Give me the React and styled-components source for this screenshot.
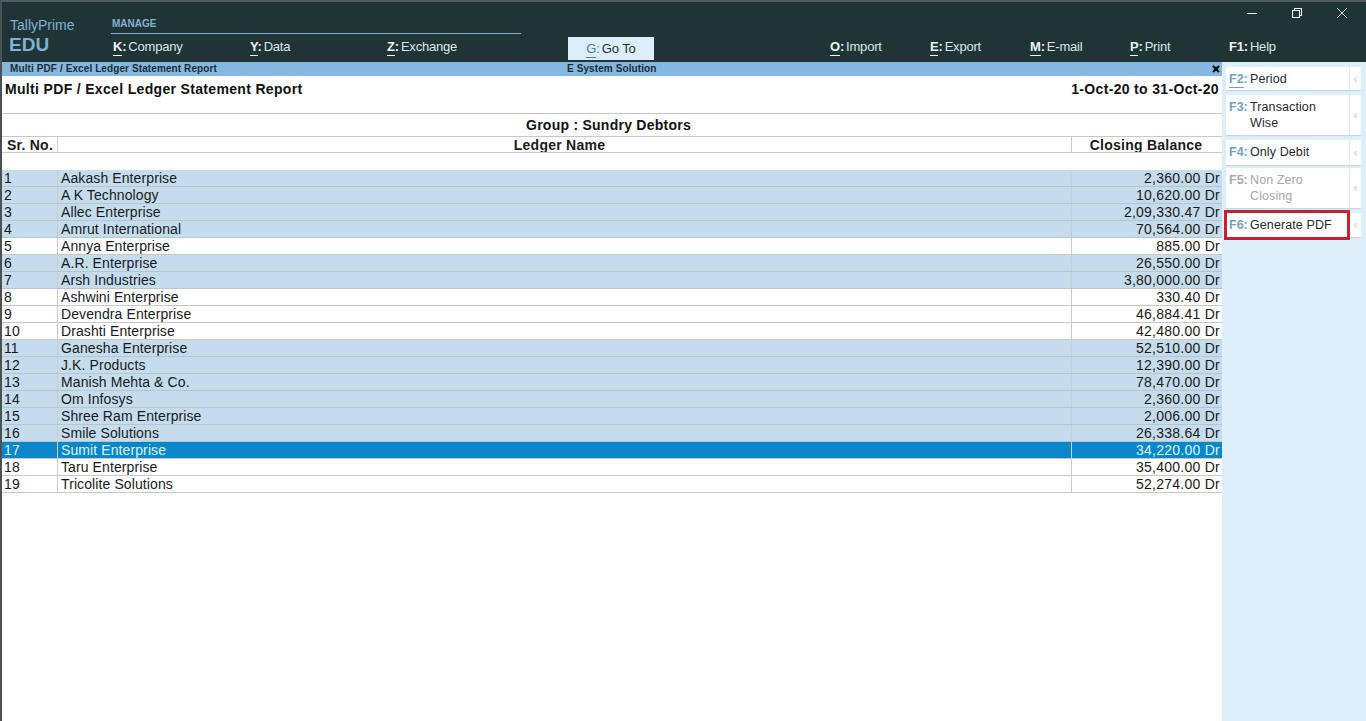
import React from "react";
import styled, { createGlobalStyle } from "styled-components";

const Global = createGlobalStyle`
  html, body { margin: 0; padding: 0; background: #fff; }
  body { font-family: "Liberation Sans", Arial, sans-serif; color: #111; overflow: hidden; }
`;

const Page = styled.div`
  width: 1366px; height: 721px; display: flex; flex-direction: column;
  border-top: 2px solid #555b5c; border-left: 2px solid #4a5253; box-sizing: border-box; overflow: hidden;
`;
const Header = styled.header`
  height: 60px; flex: none; background: #213435; display: flex; padding-left: 7px; position: relative;
`;
const Brand = styled.div`
  width: 102px; flex: none; display: flex; flex-direction: column; padding: 15px 0 0 1px; box-sizing: border-box;
`;
const BrandName = styled.div`
  font-size: 14px; line-height: 16px; color: #7fb2d4;
`;
const BrandEdu = styled.div`
  font-size: 19px; line-height: 22px; font-weight: 700; color: #7fb2d4; margin: 1px 0 0 -1px;
`;
const Manage = styled.div`
  width: 410px; flex: none; display: flex; flex-direction: column; padding-top: 16px; box-sizing: border-box;
`;
const ManageTitle = styled.div`
  font-size: 10px; line-height: 12px; font-weight: 700; color: #7fb2d4; border-bottom: 1px solid #7fb2d4;
  padding: 0 0 4px 1px; height: 11px;
`;
const ManageMenu = styled.div`
  display: flex; padding-left: 2px; margin-top: 5px;
`;
const MenuItem = styled.div`
  width: ${p => p.$w || 100}px; flex: none; font-size: 13px; line-height: 16px; color: #dbe6e9; white-space: nowrap;
  display: flex; letter-spacing: -0.2px;
`;
const Key = styled.span`
  font-weight: 700; margin-right: 2px; color: #eef3f5;
  & > u { text-decoration: none; border-bottom: 1px solid #eef3f5; padding-bottom: 1px; }
`;
const GoTo = styled.div`
  margin: 35px 0 0 47px; width: 86px; height: 23px; flex: none; background: #dceefb; color: #213435;
  font-size: 13px; display: flex; align-items: center; justify-content: center; letter-spacing: -0.1px;
`;
const GoKey = styled.span`
  color: #4e7f9e; margin-right: 2px;
  & > u { text-decoration: none; border-bottom: 1px solid #4e7f9e; padding-bottom: 1px; }
`;
const RightMenu = styled.div`
  display: flex; margin-left: 176px; padding-top: 37px;
`;
const WindowButtons = styled.div`
  position: absolute; top: 5px; right: 18px; display: flex; gap: 33px; align-items: center;
`;
const Body = styled.div`
  flex: 1; display: flex; min-height: 0;
`;
const Main = styled.main`
  width: 1220px; flex: none; box-sizing: border-box; display: flex; flex-direction: column; background: #fff;
`;
const TitleBar = styled.div`
  height: 14px; padding: 0 2px 0 8px; flex: none; background: #85b8e0; display: grid;
  grid-template-columns: 557px 1fr 10px; align-items: center;
  font-size: 10px; font-weight: 700; color: #1d2b33; line-height: 14px; letter-spacing: 0.1px;
`;
const CloseMark = styled.svg`
  display: block; margin-left: auto;
`;
const ReportHead = styled.div`
  height: 38px; flex: none; display: flex; justify-content: space-between; padding: 4px 3px 0 3px; box-sizing: border-box;
  border-bottom: 1px solid #c8c8c8; font-size: 14px; font-weight: 700; line-height: 18px; letter-spacing: 0.33px;
`;
const GroupRow = styled.div`
  height: 22px; flex: none; box-sizing: border-box; text-align: center; font-size: 14px; font-weight: 700;
  line-height: 23px; letter-spacing: 0.25px; padding-right: 7px;
`;
const Row = styled.div`
  display: grid; grid-template-columns: 55px 1fr 151px; height: 17px; box-sizing: border-box;
  border-bottom: 1px solid ${p => p.$hl ? "#b4c6d2" : "#c8c8c8"}; font-size: 14px; line-height: 16px; letter-spacing: 0.1px;
  background: ${p => p.$sel ? "#0a87c9" : p.$hl ? "#c5dcec" : "#fff"};
  color: ${p => p.$sel ? "#dff3ff" : "#1a1a1a"};
`;
const HeadRow = styled(Row)`
  border-top: 1px solid #c8c8c8; border-bottom: 1px solid #c8c8c8; font-weight: 700; letter-spacing: 0.25px;
  background: #fff; line-height: 16px;
`;
const Blank = styled.div` height: 17px; flex: none; `;
const Cell = styled.div`
  padding: 0 ${p => p.$right ? "2px" : "0"} 0 ${p => p.$pad || 3}px; text-align: ${p => p.$right ? "right" : "left"};
  border-left: ${p => p.$first ? "0" : "1px solid #c8ccd0"}; white-space: nowrap; overflow: hidden;
  letter-spacing: ${p => p.$right ? "0.25px" : "inherit"};
`;
const HeadCell = styled(Cell)`
  text-align: center; padding: 0 ${p => p.$rp || 0}px 0 ${p => p.$lp || 0}px;
`;
const Side = styled.aside`
  flex: 1; background: #deeefb; padding: 5px 5px 0 4px; display: flex; flex-direction: column;
`;
const SideBtn = styled.div`
  background: #fff; height: ${p => p.$h}px; margin-bottom: ${p => p.$mb}px; flex: none; display: flex; box-sizing: border-box;
  font-size: 12.5px; line-height: 16px; box-shadow: 0 1px 1px #c5d8e6;
  color: ${p => p.$off ? "#a8a8a8" : "#1d2b33"}; letter-spacing: 0.1px; position: relative;
`;
const SideText = styled.div`
  flex: 1; padding: 4px 0 0 3px; display: grid; grid-template-columns: 21px 1fr; align-content: start;
`;
const SideKey = styled.span`
  font-weight: 700; color: ${p => p.$off ? "#a8a8a8" : "#6fa3c4"}; letter-spacing: 0;
  & > u { text-decoration: none; border-bottom: 1px solid #6fa3c4; padding-bottom: 1px; }
`;
const Chevron = styled.div`
  width: 11px; flex: none; border-left: 1px solid #e4edf3; display: flex; align-items: center; justify-content: center;
  color: #c2ccd3; font-size: 12px;
`;
const RedBox = styled.div`
  position: absolute; left: -2px; top: -3px; width: 126px; height: 30px; box-sizing: border-box;
  border: 3px solid #c62033; pointer-events: none;
`;

const rows = [
  ["Aakash Enterprise", "2,360.00 Dr", 1], ["A K Technology", "10,620.00 Dr", 1],
  ["Allec Enterprise", "2,09,330.47 Dr", 1], ["Amrut International", "70,564.00 Dr", 1],
  ["Annya Enterprise", "885.00 Dr", 0], ["A.R. Enterprise", "26,550.00 Dr", 1],
  ["Arsh Industries", "3,80,000.00 Dr", 1], ["Ashwini Enterprise", "330.40 Dr", 0],
  ["Devendra Enterprise", "46,884.41 Dr", 0], ["Drashti Enterprise", "42,480.00 Dr", 0],
  ["Ganesha Enterprise", "52,510.00 Dr", 1], ["J.K. Products", "12,390.00 Dr", 1],
  ["Manish Mehta & Co.", "78,470.00 Dr", 1], ["Om Infosys", "2,360.00 Dr", 1],
  ["Shree Ram Enterprise", "2,006.00 Dr", 1], ["Smile Solutions", "26,338.64 Dr", 1],
  ["Sumit Enterprise", "34,220.00 Dr", 2], ["Taru Enterprise", "35,400.00 Dr", 0],
  ["Tricolite Solutions", "52,274.00 Dr", 0],
];

const Item = ({ k, label, w, under = true }) => (
  <MenuItem $w={w}>
    <Key>{under ? <u>{k}</u> : k}:</Key>{label}
  </MenuItem>
);

const SideItem = ({ k, h, mb, off, under, children, red }) => (
  <SideBtn $h={h} $mb={mb} $off={off}>
    <SideText>
      <SideKey $off={off}>{under ? <u>{k}</u> : k}:</SideKey>
      <span>{children}</span>
    </SideText>
    <Chevron>‹</Chevron>
    {red && <RedBox />}
  </SideBtn>
);

export default function App() {
  return (
    <Page>
      <Global />
      <Header>
        <Brand>
          <BrandName>TallyPrime</BrandName>
          <BrandEdu>EDU</BrandEdu>
        </Brand>
        <Manage>
          <ManageTitle>MANAGE</ManageTitle>
          <ManageMenu>
            <Item k="K" label="Company" w={137} />
            <Item k="Y" label="Data" w={137} />
            <Item k="Z" label="Exchange" w={130} />
          </ManageMenu>
        </Manage>
        <GoTo><GoKey><u>G</u>:</GoKey>Go To</GoTo>
        <RightMenu>
          <Item k="O" label="Import" w={100} />
          <Item k="E" label="Export" w={100} />
          <Item k="M" label="E-mail" w={100} />
          <Item k="P" label="Print" w={99} />
          <Item k="F1" label="Help" w={60} under={false} />
        </RightMenu>
        <WindowButtons>
          <svg width="12" height="12" viewBox="0 0 12 12" fill="none" stroke="#e6eef0"><path d="M1 6.5h10" /></svg>
          <svg width="12" height="12" viewBox="0 0 12 12" fill="none" stroke="#e6eef0" strokeWidth="1.1"><path d="M1.5 3.5h7v7h-7z M3.5 3.5v-2h7v7h-2" /></svg>
          <svg width="12" height="12" viewBox="0 0 12 12" fill="none" stroke="#e6eef0" strokeWidth="0.9"><path d="M1 1l10 10M11 1L1 11" /></svg>
        </WindowButtons>
      </Header>
      <Body>
        <Main>
          <TitleBar>
            <span>Multi PDF / Excel Ledger Statement Report</span>
            <span>E System Solution</span>
            <CloseMark width="8" height="8" viewBox="0 0 8 8" fill="none" stroke="#000" strokeWidth="2"><path d="M1 1l6 6M7 1L1 7" /></CloseMark>
          </TitleBar>
          <ReportHead>
            <span>Multi PDF / Excel Ledger Statement Report</span>
            <span>1-Oct-20 to 31-Oct-20</span>
          </ReportHead>
          <GroupRow>Group : Sundry Debtors</GroupRow>
          <HeadRow>
            <HeadCell $first $lp={1}>Sr. No.</HeadCell>
            <HeadCell $rp={10}>Ledger Name</HeadCell>
            <HeadCell $rp={2}>Closing Balance</HeadCell>
          </HeadRow>
          <Blank />
          {rows.map(([name, bal, t], i) => (
            <Row key={name} $hl={t === 1} $sel={t === 2}>
              <Cell $first $pad={2}>{i + 1}</Cell>
              <Cell $pad={3}>{name}</Cell>
              <Cell $right>{bal}</Cell>
            </Row>
          ))}
        </Main>
        <Side>
          <SideItem k="F2" h={23} mb={5} under>Period</SideItem>
          <SideItem k="F3" h={40} mb={5}>Transaction<br />Wise</SideItem>
          <SideItem k="F4" h={25} mb={3}>Only Debit</SideItem>
          <SideItem k="F5" h={40} mb={5} off>Non Zero<br />Closing</SideItem>
          <SideItem k="F6" h={24} mb={0} red>Generate PDF</SideItem>
        </Side>
      </Body>
    </Page>
  );
}
